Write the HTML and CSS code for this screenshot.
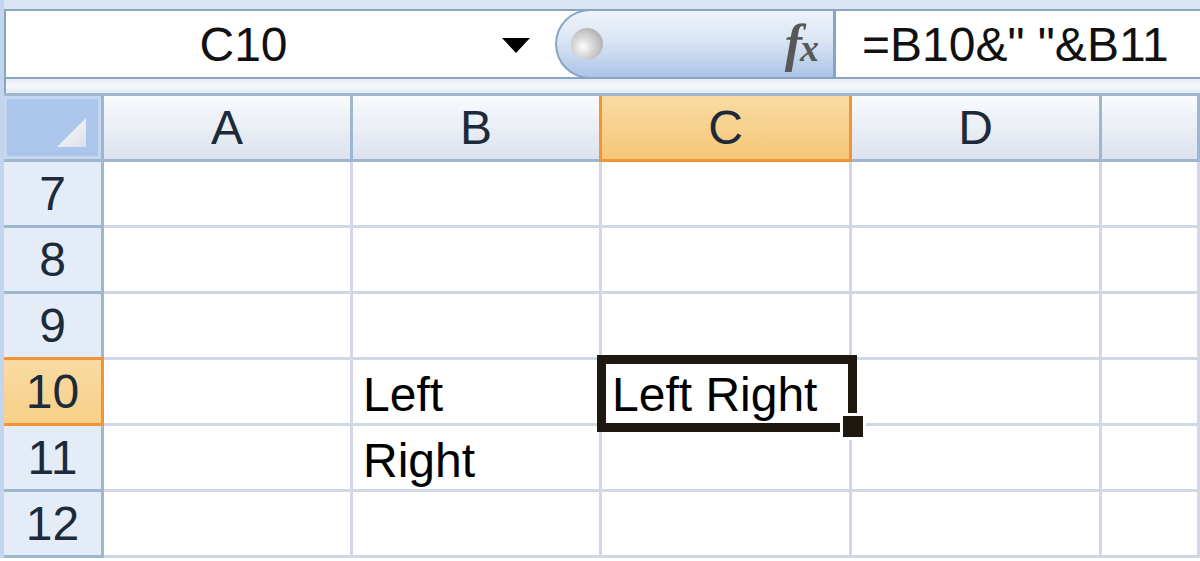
FILE: index.html
```html
<!DOCTYPE html>
<html>
<head>
<meta charset="utf-8">
<link rel="stylesheet" href="styles.css">
</head>
<body>
<div class="app">
  <div class="fbar">
    <div class="namebox"><span class="name">C10</span><span class="dd"></span></div>
    <div class="pill"><span class="ball"></span><span class="fx"><span class="f">f</span><span class="x">x</span></span></div>
    <div class="formula">=B10&amp;" "&amp;B11</div>
  </div>
  <div class="strip"></div>
  <div class="sheet">
    <div class="corner"><svg width="29" height="29" viewBox="0 0 29 29"><defs><linearGradient id="tg" x1="0" y1="0" x2="1" y2="1"><stop offset="0" stop-color="#ffffff"/><stop offset="1" stop-color="#d9e0ea"/></linearGradient></defs><polygon points="29,0 29,29 0,29" fill="url(#tg)"/></svg></div>
    <div class="ch">A</div><div class="ch">B</div><div class="ch sel">C</div><div class="ch">D</div><div class="ch"></div>

    <div class="rh">7</div><div class="c"></div><div class="c"></div><div class="c"></div><div class="c"></div><div class="c"></div>
    <div class="rh">8</div><div class="c"></div><div class="c"></div><div class="c"></div><div class="c"></div><div class="c"></div>
    <div class="rh">9</div><div class="c"></div><div class="c"></div><div class="c"></div><div class="c"></div><div class="c"></div>
    <div class="rh sel">10</div><div class="c"></div><div class="c">Left</div><div class="c active">Left Right<span class="selbox"></span><span class="handle"></span></div><div class="c"></div><div class="c"></div>
    <div class="rh">11</div><div class="c"></div><div class="c">Right</div><div class="c"></div><div class="c"></div><div class="c"></div>
    <div class="rh">12</div><div class="c"></div><div class="c"></div><div class="c"></div><div class="c"></div><div class="c"></div>
  </div>
</div>
</body>
</html>
```
FILE: styles.css
```css
* { box-sizing: border-box; }
html, body { margin: 0; padding: 0; }
body {
  width: 1200px;
  height: 561px;
  overflow: hidden;
  background: #ffffff;
  font-family: "Liberation Sans", Arial, sans-serif;
}
.app {
  padding: 9px 0 0 4px;
  background: linear-gradient(to right, #c3d5ee 0, #c3d5ee 4px, #d9e5f4 4px);
}
.fbar {
  display: flex;
  height: 70px;
  border: 2px solid #8aa4c4;
  border-right: 0;
  background: #ffffff;
}
.namebox {
  display: flex;
  align-items: center;
  width: 549px;
  flex: none;
}
.name {
  width: 475px;
  text-align: center;
  font-size: 48px;
  color: #111;
}
.dd {
  width: 0;
  height: 0;
  border-left: 14px solid transparent;
  border-right: 14px solid transparent;
  border-top: 15px solid #000;
  margin-left: 21px;
  margin-top: 2px;
}
.pill {
  flex: none;
  width: 281px;
  margin: -2px 0;
  border: 2px solid #8aa4c4;
  border-right-width: 3px;
  border-radius: 35px 0 0 35px;
  background: linear-gradient(#eef3fa 0%, #dae5f4 45%, #abc4e6 100%);
  display: flex;
  align-items: center;
}
.ball {
  width: 32px;
  height: 32px;
  border-radius: 50%;
  margin-left: 14px;
  background: radial-gradient(circle at 38% 58%, #fdfdfd 0, #d8d8d8 35%, #9a9a9a 100%);
}
.fx {
  margin-left: auto;
  margin-right: 14px;
  font-family: "Liberation Serif", "DejaVu Serif", serif;
  font-style: italic;
  font-weight: bold;
  color: #585858;
  line-height: 1;
}
.fx .f { font-size: 52px; }
.fx .x { font-size: 38px; margin-left: -2px; }
.formula {
  flex: 1;
  padding-left: 26px;
  display: flex;
  align-items: center;
  font-size: 48px;
  color: #111;
  white-space: nowrap;
  overflow: hidden;
}
.strip {
  height: 14px;
  border-left: 2px solid #8aa4c4;
  background: linear-gradient(#e4ecf7, #f6f9fd 50%, #e2eaf5);
}
.sheet {
  display: grid;
  grid-template-columns: 100px 249px 249px 250px 250px 1fr;
  grid-template-rows: repeat(7, 66px);
  border-top: 3px solid #9eb6ce;
  background: #ffffff;
  font-size: 48px;
}
.corner {
  background: #abc6ea;
  border-right: 3px solid #9eb6ce;
  border-bottom: 3px solid #9eb6ce;
  box-shadow: inset 0 0 0 3px #c4d6f0;
  display: flex;
  align-items: flex-end;
  justify-content: flex-end;
  padding: 0 15px 12px 0;
}
.corner svg { display: block; }
.ch {
  background: linear-gradient(#f8fafd, #dce3ee);
  border-right: 3px solid #9eb6ce;
  border-bottom: 3px solid #9eb6ce;
  display: flex;
  align-items: center;
  justify-content: center;
  color: #1c2a3a;
}
.ch.sel {
  background: linear-gradient(#f9dca4, #f5c677);
  border-right-color: #f29436;
  border-bottom-color: #f29436;
  box-shadow: -3px 0 0 #f29436;
}
.rh {
  background: #e4ecf7;
  border-right: 3px solid #9eb6ce;
  border-bottom: 3px solid #9eb6ce;
  display: flex;
  align-items: center;
  justify-content: center;
  color: #1c2a3a;
}
.rh.sel {
  background: linear-gradient(#f9dba3, #f7cf88);
  border-right-color: #f29436;
  border-bottom-color: #f29436;
  box-shadow: 0 -3px 0 #f29436;
}
.c {
  border-right: 3px solid #d0d7e5;
  border-bottom: 3px solid #d0d7e5;
  display: flex;
  align-items: flex-end;
  padding: 0 0 1px 10px;
  color: #000;
  white-space: nowrap;
}
.c.active { position: relative; }
.selbox {
  position: absolute;
  left: -5px;
  top: -5px;
  width: 260px;
  height: 77px;
  border: 9px solid #1d1911;
}
.handle {
  position: absolute;
  left: 241px;
  top: 56px;
  width: 20px;
  height: 21px;
  background: #1d1911;
  box-shadow: 0 0 0 3px #ffffff;
}
```
